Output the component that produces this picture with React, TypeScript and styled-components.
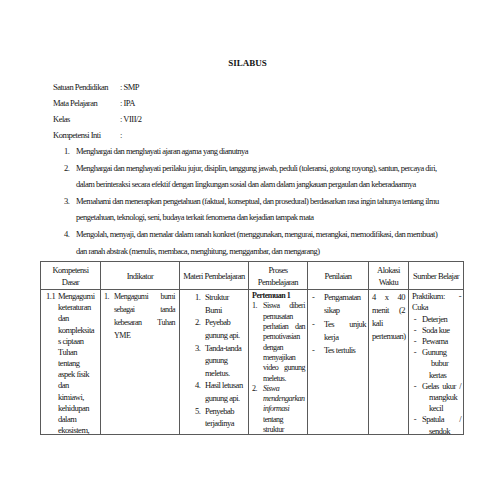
import React from 'react';
import styled, { createGlobalStyle } from 'styled-components';

const Global = createGlobalStyle`
  html, body { margin: 0; padding: 0; background: #ffffff; }
  body { font-family: "Liberation Serif", "Times New Roman", serif; color: #141414; }
`;

const Page = styled.div`
  width: 495px;
  height: 495px;
  box-sizing: border-box;
  padding-top: 57px;
  overflow: hidden;
  font-size: 8.5px;
  letter-spacing: -0.5px;
`;

const Title = styled.h1`
  margin: 0;
  text-align: center;
  font-size: 9px;
  font-weight: bold;
  line-height: 12px;
  letter-spacing: 0;
`;

const InfoGrid = styled.div`
  display: grid;
  grid-template-columns: 67px auto;
  padding-left: 53px;
  margin-top: 10px;
  line-height: 16px;
`;

const List = styled.ol`
  list-style: none;
  margin: 0;
  padding: 0 0 0 64px;
  line-height: 16.6px;
`;

const ListItem = styled.li`
  display: flex;
`;

const Num = styled.span<{ $w: number }>`
  flex: 0 0 ${p => p.$w}px;
`;

const Lines = styled.div`
  flex: 1;
  min-width: 0;
`;

const Line = styled.span<{ $justify?: boolean; $italic?: boolean; $indent?: number; $bold?: boolean }>`
  display: block;
  white-space: nowrap;
  text-align: ${p => (p.$justify ? 'justify' : 'left')};
  text-align-last: ${p => (p.$justify ? 'justify' : 'left')};
  font-style: ${p => (p.$italic ? 'italic' : 'normal')};
  font-weight: ${p => (p.$bold ? 'bold' : 'normal')};
  padding-left: ${p => p.$indent ?? 0}px;
`;

const Table = styled.table`
  margin: 2px 0 0 40px;
  width: 423px;
  border-collapse: collapse;
  table-layout: fixed;
  border: 1px solid #5a5a5a;
`;

const Th = styled.th`
  border: 1px solid #5a5a5a;
  height: 27px;
  padding: 0;
  font-weight: normal;
  font-size: 8.5px;
  line-height: 12px;
  text-align: center;
  vertical-align: middle;
`;

const Td = styled.td`
  border: 1px solid #5a5a5a;
  padding: 0;
  vertical-align: top;
`;

const Cell = styled.div<{ $pl: number; $pr: number; $lh: number; $fs?: number }>`
  height: 144px;
  overflow: hidden;
  box-sizing: border-box;
  padding: 1px ${p => p.$pr}px 0 ${p => p.$pl}px;
  line-height: ${p => p.$lh}px;
  ${p => (p.$fs ? `font-size: ${p.$fs}px;` : '')}
`;

const Row = styled.div`
  display: flex;
`;

const info = [
  ['Satuan Pendidikan', ': SMP'],
  ['Mata Pelajaran', ': IPA'],
  ['Kelas', ': VIII/2'],
  ['Kompetensi Inti', ':'],
];

const ki: string[][] = [
  ['Menghargai dan menghayati ajaran agama yang dianutnya'],
  [
    'Menghargai dan menghayati perilaku jujur, disiplin, tanggung jawab, peduli (toleransi, gotong royong), santun, percaya diri,',
    'dalam berinteraksi secara efektif dengan lingkungan sosial dan alam dalam jangkauan pergaulan dan keberadaannya',
  ],
  [
    'Memahami dan menerapkan pengetahuan (faktual, konseptual, dan prosedural) berdasarkan rasa ingin tahunya tentang ilmu',
    'pengetahuan, teknologi, seni, budaya terkait fenomena dan kejadian tampak mata',
  ],
  [
    'Mengolah, menyaji, dan menalar dalam ranah konkret (menggunakan, mengurai, merangkai, memodifikasi, dan membuat)',
    'dan ranah abstrak (menulis, membaca, menghitung, menggambar, dan mengarang)',
  ],
];

const kdLines = ['Mengagumi', 'keteraturan', 'dan', 'kompleksita', 's ciptaan', 'Tuhan', 'tentang', 'aspek fisik', 'dan', 'kimiawi,', 'kehidupan', 'dalam', 'ekosistem,'];

const materi: string[][] = [
  ['Struktur', 'Bumi'],
  ['Peyebab', 'gunung api.'],
  ['Tanda-tanda', 'gunung', 'meletus.'],
  ['Hasil letusan', 'gunung api.'],
  ['Penyebab', 'terjadinya'],
];

const sumber: { first: string; rest: { t: string; i: number }[]; justify?: boolean }[] = [
  { first: 'Deterjen', rest: [] },
  { first: 'Soda kue', rest: [] },
  { first: 'Pewarna', rest: [] },
  { first: 'Gunung', rest: [{ t: 'bubur', i: 9 }, { t: 'kertas', i: 7 }] },
  { first: 'Gelas ukur /', rest: [{ t: 'mangkuk', i: 7 }, { t: 'kecil', i: 7 }], justify: true },
  { first: 'Spatula /', rest: [{ t: 'sendok', i: 7 }], justify: true },
];

export default function App() {
  return (
    <>
      <Global />
      <Page>
        <Title>SILABUS</Title>
        <InfoGrid>
          {info.map(([k, v]) => (
            <React.Fragment key={k}>
              <span>{k}</span>
              <span>{v}</span>
            </React.Fragment>
          ))}
        </InfoGrid>
        <List>
          {ki.map((lines, i) => (
            <ListItem key={i}>
              <Num $w={12}>{i + 1}.</Num>
              <Lines>
                {lines.map(l => (
                  <Line key={l}>{l}</Line>
                ))}
              </Lines>
            </ListItem>
          ))}
        </List>
        <Table>
          <colgroup>
            <col style={{ width: 60 }} />
            <col style={{ width: 79 }} />
            <col style={{ width: 69 }} />
            <col style={{ width: 59 }} />
            <col style={{ width: 61 }} />
            <col style={{ width: 40 }} />
            <col style={{ width: 55 }} />
          </colgroup>
          <thead>
            <tr>
              <Th>Kompetensi<br />Dasar</Th>
              <Th>Indikator</Th>
              <Th>Materi Pembelajaran</Th>
              <Th>Proses<br />Pembelajaran</Th>
              <Th>Penilaian</Th>
              <Th>Alokasi<br />Waktu</Th>
              <Th>Sumber Belajar</Th>
            </tr>
          </thead>
          <tbody>
            <tr>
              <Td>
                <Cell $pl={5} $pr={2} $lh={11.15}>
                  <Row>
                    <Num $w={12}>1.1</Num>
                    <Lines>
                      {kdLines.map((l, i) => (
                        <Line key={i}>{l}</Line>
                      ))}
                    </Lines>
                  </Row>
                </Cell>
              </Td>
              <Td>
                <Cell $pl={3} $pr={4} $lh={12.8} $fs={8}>
                  <Row>
                    <Num $w={10}>1.</Num>
                    <Lines>
                      <Line $justify>Mengagumi bumi</Line>
                      <Line $justify>sebagai tanda</Line>
                      <Line $justify>kebesaran Tuhan</Line>
                      <Line>YME</Line>
                    </Lines>
                  </Row>
                </Cell>
              </Td>
              <Td>
                <Cell $pl={15} $pr={2} $lh={12.6}>
                  {materi.map((m, i) => (
                    <Row key={i}>
                      <Num $w={10}>{i + 1}.</Num>
                      <Lines>
                        {m.map(l => (
                          <Line key={l}>{l}</Line>
                        ))}
                      </Lines>
                    </Row>
                  ))}
                </Cell>
              </Td>
              <Td>
                <Cell $pl={3} $pr={2} $lh={10.3} $fs={8}>
                  <Line $bold>Pertemuan 1</Line>
                  <Row>
                    <Num $w={11}>1.</Num>
                    <Lines>
                      <Line $justify>Siswa diberi</Line>
                      <Line>pemusatan</Line>
                      <Line $justify>perhatian dan</Line>
                      <Line>pemotivasian</Line>
                      <Line>dengan</Line>
                      <Line>menyajikan</Line>
                      <Line $justify>video gunung</Line>
                      <Line>meletus.</Line>
                    </Lines>
                  </Row>
                  <Row>
                    <Num $w={11}>2.</Num>
                    <Lines>
                      <Line $italic>Siswa</Line>
                      <Line $italic>mendengarkan</Line>
                      <Line $italic>informasi</Line>
                      <Line>tentang</Line>
                      <Line>struktur</Line>
                    </Lines>
                  </Row>
                </Cell>
              </Td>
              <Td>
                <Cell $pl={4} $pr={2} $lh={13.3}>
                  {[['Pengamatan', 'sikap'], ['Tes unjuk', 'kerja'], ['Tes tertulis']].map((it, i) => (
                    <Row key={i}>
                      <Num $w={12}>-</Num>
                      <Lines>
                        {it.map((l, j) => (
                          <Line key={l} $justify={i === 1 && j === 0}>{l}</Line>
                        ))}
                      </Lines>
                    </Row>
                  ))}
                </Cell>
              </Td>
              <Td>
                <Cell $pl={3} $pr={3} $lh={13}>
                  <Line $justify>4 x 40</Line>
                  <Line $justify>menit (2</Line>
                  <Line>kali</Line>
                  <Line>pertemuan)</Line>
                </Cell>
              </Td>
              <Td>
                <Cell $pl={3} $pr={2} $lh={11.2}>
                  <Line $justify>Praktikum: -</Line>
                  <Line>Cuka</Line>
                  {sumber.map(s => (
                    <Row key={s.first}>
                      <Num $w={10}>&nbsp;-</Num>
                      <Lines>
                        <Line $justify={s.justify}>{s.first}</Line>
                        {s.rest.map(r => (
                          <Line key={r.t} $indent={r.i}>{r.t}</Line>
                        ))}
                      </Lines>
                    </Row>
                  ))}
                </Cell>
              </Td>
            </tr>
          </tbody>
        </Table>
      </Page>
    </>
  );
}
